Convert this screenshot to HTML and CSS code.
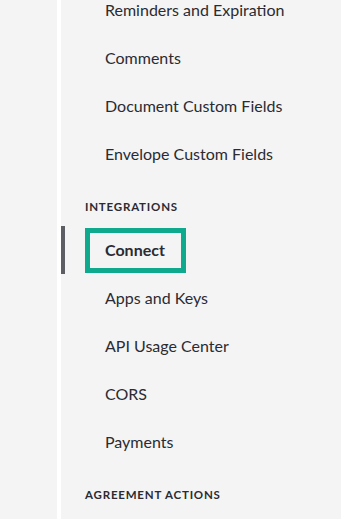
FILE: index.html
```html
<!DOCTYPE html>
<html lang="en">
<head>
<meta charset="utf-8">
<title>Settings navigation</title>
<link rel="stylesheet" href="styles.css">
</head>
<body>
<div class="layout">
  <div class="rail"></div>
  <nav class="sidenav">
    <ul class="nav-list">
      <li class="nav-item"><span class="nav-link">Reminders and Expiration</span></li>
      <li class="nav-item"><span class="nav-link">Comments</span></li>
      <li class="nav-item"><span class="nav-link">Document Custom Fields</span></li>
      <li class="nav-item"><span class="nav-link">Envelope Custom Fields</span></li>
      <li class="nav-heading">Integrations</li>
      <li class="nav-item is-active"><span class="nav-link focus-box">Connect</span></li>
      <li class="nav-item"><span class="nav-link">Apps and Keys</span></li>
      <li class="nav-item"><span class="nav-link">API Usage Center</span></li>
      <li class="nav-item"><span class="nav-link">CORS</span></li>
      <li class="nav-item"><span class="nav-link">Payments</span></li>
      <li class="nav-heading">Agreement Actions</li>
    </ul>
  </nav>
</div>
</body>
</html>
```

FILE: styles.css
```css
html, body {
  margin: 0;
  padding: 0;
  background: #ffffff;
  height: 100%;
  overflow: hidden;
}

.layout {
  display: flex;
  gap: 4px;
  height: 519px;
  font-family: Lato, "Noto Sans", sans-serif;
  color: #2b2b31;
}

.rail {
  width: 57px;
  flex: none;
  background: #f4f4f4;
}

.sidenav {
  width: 280px;
  flex: none;
  background: #f4f4f4;
  overflow: hidden;
}

.nav-list {
  list-style: none;
  margin: -13px 0 0 0;
  padding: 0;
}

.nav-item {
  height: 48px;
  box-sizing: border-box;
  display: flex;
  align-items: center;
  padding: 0 0 3px 44px;
  font-size: 16px;
}

.nav-item.is-active {
  position: relative;
  padding: 0 0 0 24px;
  font-weight: 700;
}

.nav-item.is-active::before {
  content: "";
  position: absolute;
  left: 0;
  top: -1px;
  width: 4px;
  height: 48px;
  background: #5d5d64;
}

.focus-box {
  display: flex;
  align-items: center;
  box-sizing: border-box;
  height: 45px;
  width: 101px;
  padding: 0 0 2px 15px;
  border: 5px solid #0fa98e;
  margin-top: -1px;
}

.nav-heading {
  height: 48px;
  box-sizing: border-box;
  padding: 21px 0 0 24px;
  font-size: 11.5px;
  font-weight: 700;
  text-transform: uppercase;
  letter-spacing: 0.8px;
  color: #2b2b31;
}
```
